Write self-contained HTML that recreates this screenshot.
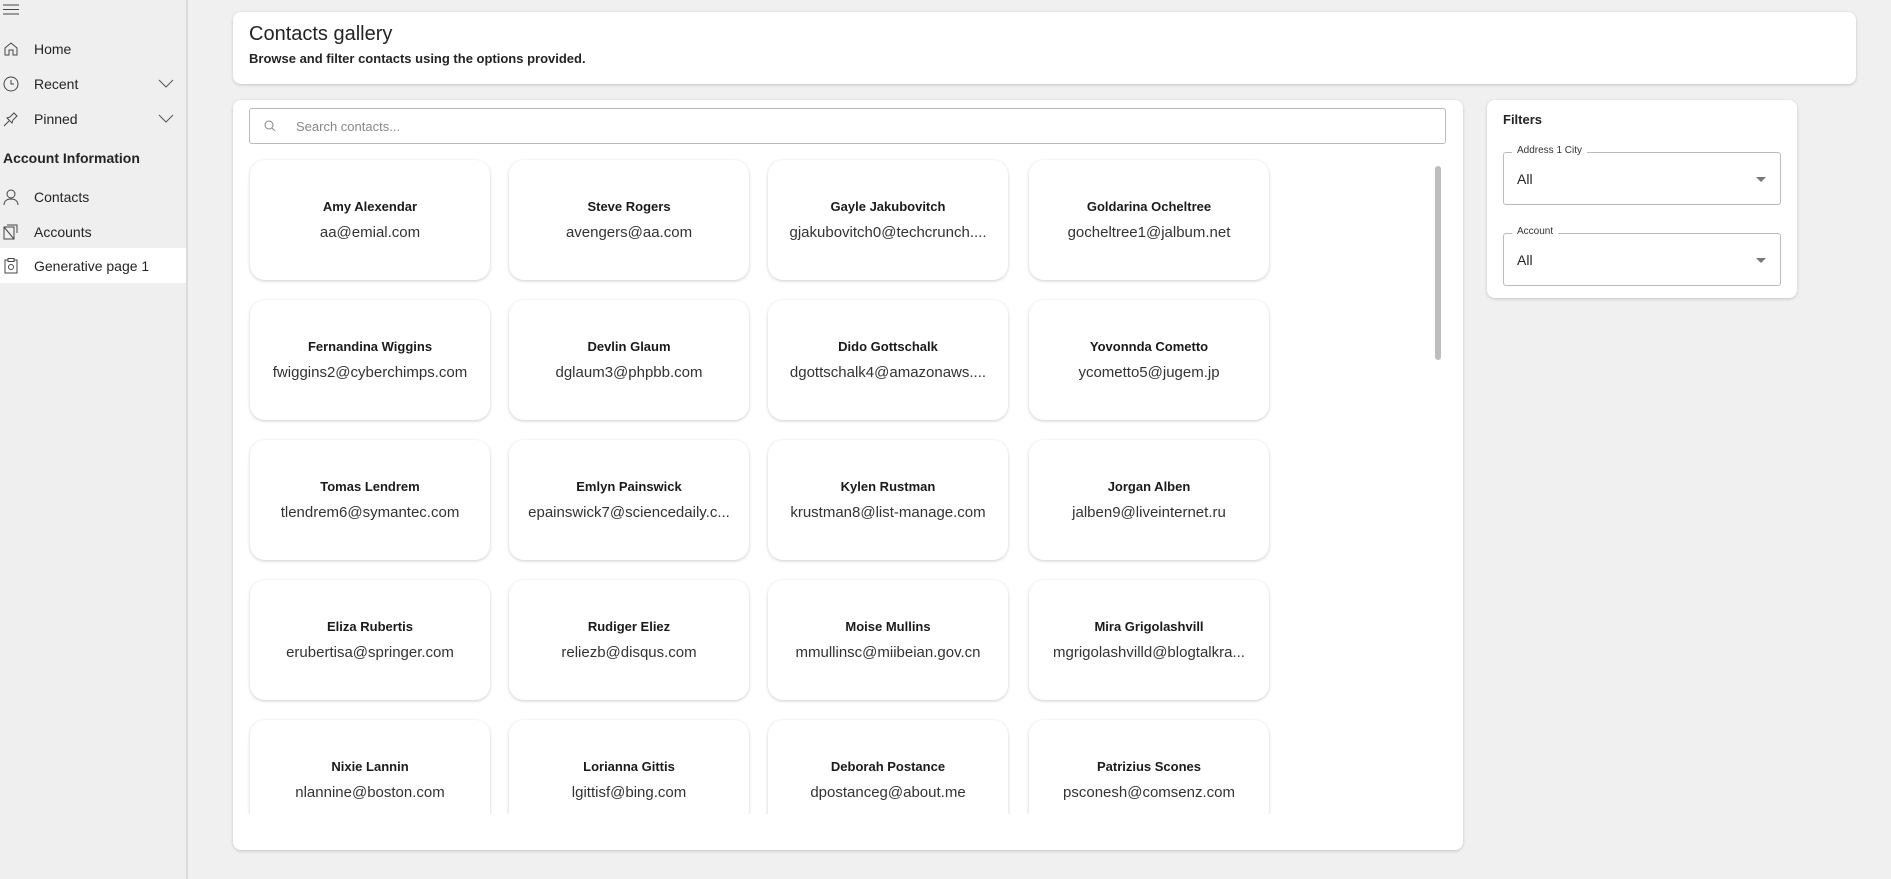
<!DOCTYPE html>
<html><head><style>
*{box-sizing:border-box;margin:0;padding:0}
body{width:1891px;height:879px;background:#f0f0f0;font-family:"Liberation Sans",sans-serif;color:#242424;position:relative;overflow:hidden}
.side{position:absolute;left:0;top:0;width:188px;height:879px;background:#efefef;border-right:2px solid #dcdcdc}
.nav{position:absolute;left:0;width:186px;height:35px;display:flex;align-items:center;font-size:14px}
.nav svg{position:absolute;left:3px}
.nav span{position:absolute;left:34px}
.chev{position:absolute;left:158px}
.card{position:absolute;background:#fff;border-radius:8px;box-shadow:0 1px 3px rgba(0,0,0,.18)}
.c{position:absolute;width:240px;height:120px;background:#fff;border-radius:15px;box-shadow:0 1px 3px rgba(0,0,0,.2);text-align:center}
.c b{display:block;margin-top:39px;font-size:13px;color:#1a1a1a}
.c i{display:block;font-style:normal;font-size:15px;margin-top:10px;color:#333;white-space:nowrap}
.dd{position:absolute;left:16px;width:278px;height:53px;border:1px solid #bbb;border-radius:3px}
.dd .l{position:absolute;top:-8px;left:8px;background:#fff;padding:0 5px;font-size:10px;color:#333}
.dd .v{position:absolute;left:13px;top:18px;font-size:14px}
.dd .a{position:absolute;right:14px;top:24px;border-left:5px solid transparent;border-right:5px solid transparent;border-top:5px solid #777}
</style></head><body>
<div class="side">
<svg style="position:absolute;left:3px;top:4px" width="17" height="11"><path d="M0 1h16M0 5.5h16M0 10h16" stroke="#444" stroke-width="1"/></svg>
<div class="nav" style="top:31px"><svg width="16" height="16" viewBox="0 0 16 16"><path d="M2 7L8 2l6 5v7h-4V9H6v5H2z" fill="none" stroke="#444"/></svg><span>Home</span></div>
<div class="nav" style="top:66px"><svg width="16" height="16" viewBox="0 0 16 16"><circle cx="8" cy="8" r="7" fill="none" stroke="#444"/><path d="M8 4v4h3" fill="none" stroke="#444"/></svg><span>Recent</span><svg class="chev" style="left:158px" width="16" height="10"><path d="M1 1l7 7 7-7" fill="none" stroke="#555"/></svg></div>
<div class="nav" style="top:101px"><svg width="16" height="16" viewBox="0 0 16 16"><path d="M1 15l5-5M4 7l5 5 1-3 4-4-3-3-4 4z" fill="none" stroke="#444"/></svg><span>Pinned</span><svg class="chev" style="left:158px" width="16" height="10"><path d="M1 1l7 7 7-7" fill="none" stroke="#555"/></svg></div>
<div class="nav" style="top:140px;font-weight:bold"><span style="left:3px">Account Information</span></div>
<div class="nav" style="top:179px"><svg width="16" height="16" viewBox="0 0 16 16"><circle cx="8" cy="5" r="4" fill="none" stroke="#444"/><path d="M1 16c0-4 3-6 7-6s7 2 7 6" fill="none" stroke="#444"/></svg><span>Contacts</span></div>
<div class="nav" style="top:214px"><svg width="16" height="16" viewBox="0 0 16 16"><path d="M1 3h10v12H1zM4 1h10v8M1 3l10 12" fill="none" stroke="#444"/></svg><span>Accounts</span></div>
<div class="nav" style="top:248px;background:#fff"><svg width="16" height="16" viewBox="0 0 16 16"><rect x="2" y="2" width="12" height="13" fill="none" stroke="#444"/><rect x="5" y="0.5" width="6" height="3" fill="#fff" stroke="#444"/><circle cx="8" cy="9" r="2.5" fill="none" stroke="#444"/></svg><span>Generative page 1</span></div>
</div>
<div class="card" style="left:233px;top:12px;width:1623px;height:72px">
<div style="position:absolute;left:16px;top:11px;font-size:20px">Contacts gallery</div>
<div style="position:absolute;left:16px;top:39px;font-size:13px;font-weight:bold">Browse and filter contacts using the options provided.</div>
</div>
<div class="card" style="left:233px;top:100px;width:1230px;height:750px;overflow:hidden">
<div style="position:absolute;left:16px;top:8px;width:1197px;height:36px;border:1px solid #bbb;border-radius:3px">
<svg style="position:absolute;left:14px;top:11px" width="12" height="12"><circle cx="5" cy="5" r="4" fill="none" stroke="#888"/><path d="M8 8l3 3" stroke="#888"/></svg>
<span style="position:absolute;left:46px;top:10px;font-size:13px;color:#888">Search contacts...</span></div>
<div style="position:absolute;left:0;top:0;width:1230px;height:714px;overflow:hidden">
<div class="c" style="left:17px;top:60px"><b>Amy Alexendar</b><i>aa@emial.com</i></div>
<div class="c" style="left:276px;top:60px"><b>Steve Rogers</b><i>avengers@aa.com</i></div>
<div class="c" style="left:535px;top:60px"><b>Gayle Jakubovitch</b><i>gjakubovitch0@techcrunch....</i></div>
<div class="c" style="left:796px;top:60px"><b>Goldarina Ocheltree</b><i>gocheltree1@jalbum.net</i></div>
<div class="c" style="left:17px;top:200px"><b>Fernandina Wiggins</b><i>fwiggins2@cyberchimps.com</i></div>
<div class="c" style="left:276px;top:200px"><b>Devlin Glaum</b><i>dglaum3@phpbb.com</i></div>
<div class="c" style="left:535px;top:200px"><b>Dido Gottschalk</b><i>dgottschalk4@amazonaws....</i></div>
<div class="c" style="left:796px;top:200px"><b>Yovonnda Cometto</b><i>ycometto5@jugem.jp</i></div>
<div class="c" style="left:17px;top:340px"><b>Tomas Lendrem</b><i>tlendrem6@symantec.com</i></div>
<div class="c" style="left:276px;top:340px"><b>Emlyn Painswick</b><i>epainswick7@sciencedaily.c...</i></div>
<div class="c" style="left:535px;top:340px"><b>Kylen Rustman</b><i>krustman8@list-manage.com</i></div>
<div class="c" style="left:796px;top:340px"><b>Jorgan Alben</b><i>jalben9@liveinternet.ru</i></div>
<div class="c" style="left:17px;top:480px"><b>Eliza Rubertis</b><i>erubertisa@springer.com</i></div>
<div class="c" style="left:276px;top:480px"><b>Rudiger Eliez</b><i>reliezb@disqus.com</i></div>
<div class="c" style="left:535px;top:480px"><b>Moise Mullins</b><i>mmullinsc@miibeian.gov.cn</i></div>
<div class="c" style="left:796px;top:480px"><b>Mira Grigolashvill</b><i>mgrigolashvilld@blogtalkra...</i></div>
<div class="c" style="left:17px;top:620px"><b>Nixie Lannin</b><i>nlannine@boston.com</i></div>
<div class="c" style="left:276px;top:620px"><b>Lorianna Gittis</b><i>lgittisf@bing.com</i></div>
<div class="c" style="left:535px;top:620px"><b>Deborah Postance</b><i>dpostanceg@about.me</i></div>
<div class="c" style="left:796px;top:620px"><b>Patrizius Scones</b><i>psconesh@comsenz.com</i></div>
</div>
<div style="position:absolute;left:1202px;top:66px;width:6px;height:194px;background:#bdbdbd;border-radius:3px"></div>
</div>
<div class="card" style="left:1487px;top:100px;width:310px;height:198px">
<div style="position:absolute;left:16px;top:12px;font-size:13px;font-weight:bold">Filters</div>
<div class="dd" style="top:52px"><span class="l">Address 1 City</span><span class="v">All</span><span class="a"></span></div>
<div class="dd" style="top:133px"><span class="l">Account</span><span class="v">All</span><span class="a"></span></div>
</div>
</body></html>
